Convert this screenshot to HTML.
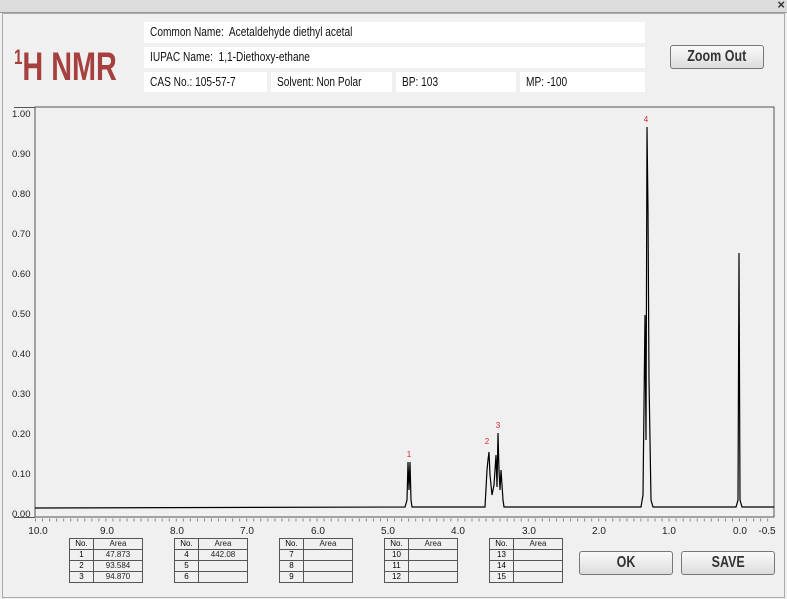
<!DOCTYPE html>
<html><head><style>
body{margin:0;width:787px;height:599px;background:#f0f0f0;font-family:"Liberation Sans",sans-serif;position:relative;overflow:hidden}
.a{position:absolute}
.box{position:absolute;background:#fff;font-size:13px;color:#111;line-height:20px;padding-left:6px;box-sizing:border-box;white-space:nowrap}
.box span,.btn span{display:inline-block;transform:scaleX(.78);transform-origin:left center}
.btn span{transform-origin:center}
.btn{position:absolute;border:1px solid #777;border-radius:3px;background:linear-gradient(#fafafa,#dcdcdc);font-weight:bold;font-size:16px;text-align:center;color:#333;box-sizing:border-box}
table{position:absolute;border-collapse:collapse;font-size:8px;background:#f0f0f0}
td{border:1px solid #555;height:10px;padding:0;text-align:center;line-height:10px}
td.n{width:23px}td.v{width:48px;color:#222}
</style></head><body>
<div class="a" style="left:0;top:0;width:787px;height:12px;background:#dcdcdc;border-bottom:1px solid #999"></div>
<div class="a" style="right:2px;top:-3px;font-size:13px;font-weight:bold;color:#333">×</div>
<div class="a" style="left:2px;top:13px;width:781px;height:583px;border:1px solid #aaa"></div>
<div class="a" style="left:14px;top:36px;font-size:40px;font-weight:bold;color:#a5403e;line-height:44px;transform:scaleX(.72);transform-origin:left center;white-space:nowrap"><sup style="font-size:21px;vertical-align:16px">1</sup>H NMR</div>
<div class="box" style="left:144px;top:22px;width:501px;height:21px"><span>Common Name:&nbsp; Acetaldehyde diethyl acetal</span></div>
<div class="box" style="left:144px;top:47px;width:501px;height:21px"><span>IUPAC Name:&nbsp; 1,1-Diethoxy-ethane</span></div>
<div class="box" style="left:144px;top:72px;width:123px;height:20px"><span>CAS No.: 105-57-7</span></div>
<div class="box" style="left:271px;top:72px;width:121px;height:20px"><span>Solvent: Non Polar</span></div>
<div class="box" style="left:396px;top:72px;width:120px;height:20px"><span>BP: 103</span></div>
<div class="box" style="left:520px;top:72px;width:125px;height:20px"><span>MP: -100</span></div>
<div class="btn" style="left:670px;top:45px;width:94px;height:24px;line-height:22px"><span>Zoom Out</span></div>
<svg class="a" style="left:0;top:0" width="787" height="599">
<rect x="35" y="107" width="739" height="410" fill="none" stroke="#555" stroke-width="1"/>
<line x1="14" y1="107.5" x2="35" y2="107.5" stroke="#555"/>
<line x1="14" y1="517.5" x2="35" y2="517.5" stroke="#555"/>
<line x1="35" y1="520" x2="774" y2="520" stroke="#888" stroke-width="3" stroke-dasharray="1 6.04"/>
<g font-family="Liberation Sans" font-size="9.5" fill="#222">
<text x="12" y="117">1.00</text><text x="12" y="157">0.90</text><text x="12" y="197">0.80</text><text x="12" y="237">0.70</text><text x="12" y="277">0.60</text><text x="12" y="317">0.50</text><text x="12" y="357">0.40</text><text x="12" y="397">0.30</text><text x="12" y="437">0.20</text><text x="12" y="477">0.10</text><text x="12" y="517">0.00</text>
</g>
<g font-family="Liberation Sans" font-size="10" fill="#222" text-anchor="middle">
<text x="38" y="534">10.0</text><text x="107" y="534">9.0</text><text x="177" y="534">8.0</text><text x="247" y="534">7.0</text><text x="318" y="534">6.0</text><text x="388" y="534">5.0</text><text x="458" y="534">4.0</text><text x="529" y="534">3.0</text><text x="599" y="534">2.0</text><text x="669" y="534">1.0</text><text x="740" y="534">0.0</text><text x="767" y="534">-0.5</text>
</g>
<polyline fill="none" stroke="#000" stroke-width="1.2" points="35,508 405,507 407,500 408,462 409,490 410,462 411,500 412,507 485,507 487,470 488,460 489,452 490,475 492,495 494,485 496,455 497,487 498,433 499,470 500,490 501,470 503,500 504,507 641,507 643,495 645,315 646,440 647,127 648,210 649,380 651,500 653,507 736,507 738,500 739,253 740,500 742,507 774,507"/>
<g font-family="Liberation Sans" font-size="8" fill="#e0203a" text-anchor="middle">
<text x="409" y="457">1</text><text x="487" y="444">2</text><text x="498" y="428">3</text><text x="646" y="122">4</text>
</g>
</svg>
<table style="left:69px;top:538px"><tr><td class="n">No.</td><td class="v">Area</td></tr><tr><td>1</td><td class="v">47.873</td></tr><tr><td>2</td><td class="v">93.584</td></tr><tr><td>3</td><td class="v">94.870</td></tr></table>
<table style="left:174px;top:538px"><tr><td class="n">No.</td><td class="v">Area</td></tr><tr><td>4</td><td class="v">442.08</td></tr><tr><td>5</td><td></td></tr><tr><td>6</td><td></td></tr></table>
<table style="left:279px;top:538px"><tr><td class="n">No.</td><td class="v">Area</td></tr><tr><td>7</td><td></td></tr><tr><td>8</td><td></td></tr><tr><td>9</td><td></td></tr></table>
<table style="left:384px;top:538px"><tr><td class="n">No.</td><td class="v">Area</td></tr><tr><td>10</td><td></td></tr><tr><td>11</td><td></td></tr><tr><td>12</td><td></td></tr></table>
<table style="left:489px;top:538px"><tr><td class="n">No.</td><td class="v">Area</td></tr><tr><td>13</td><td></td></tr><tr><td>14</td><td></td></tr><tr><td>15</td><td></td></tr></table>
<div class="btn" style="left:579px;top:551px;width:94px;height:24px;line-height:22px"><span>OK</span></div>
<div class="btn" style="left:681px;top:551px;width:94px;height:24px;line-height:22px"><span>SAVE</span></div>
</body></html>
